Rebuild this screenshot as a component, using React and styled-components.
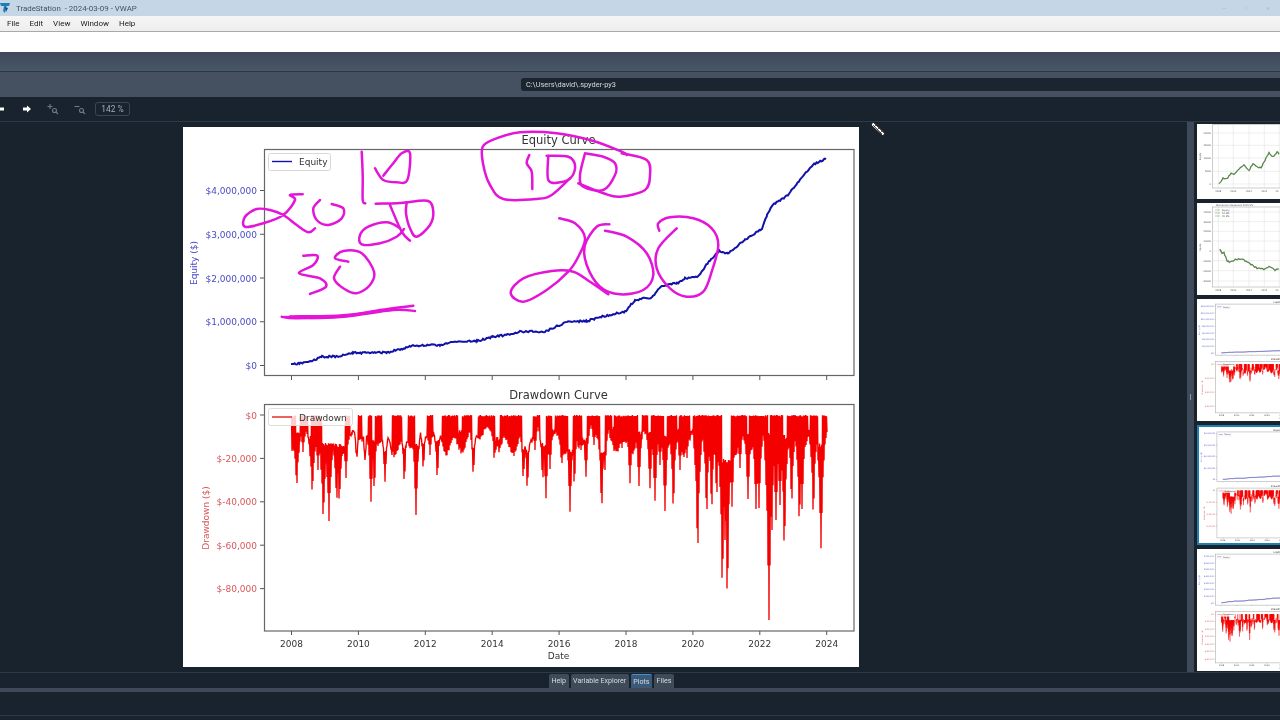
import React from 'react';
import styled, { createGlobalStyle } from 'styled-components';

// chart data is kept in page pixels, the figure viewBox starts at the plot's corner
const random = (seed) => {
    let s = seed;
    return () => {
        s = (s * 1664525 + 1013904223) % 4294967296;
        return s / 4294967296;
    };
};

const equityKeys = [[291, 364.5], [300, 363.5], [313, 360.7], [322, 356.7], [337, 356.5], [353, 353], [387, 352.5], [400, 349.3], [413, 345.7], [440, 345], [455, 341.7], [477, 341], [493, 336.7], [513, 334.3], [520, 331.5], [545, 331.7], [567, 321.7], [587, 321], [600, 317], [625, 311.7], [635, 300], [652, 297.3], [662, 285.7], [677, 283.3], [685, 278.3], [698, 276.7], [710, 260], [719, 251], [728, 253.3], [745, 240], [762, 228.3], [767, 215], [773, 205], [788, 195], [813, 164.3], [827, 158.3]];

const buildEquity = (keys, flatten, seed) => {
    const rnd = random(seed);
    const pts = [];
    for (let i = 0; i < keys.length - 1; i++) {
        const [x0, y0] = keys[i];
        const [x1, y1] = keys[i + 1];
        for (let x = x0; x < x1; x += 1.2) {
            const y = y0 + ((y1 - y0) * (x - x0)) / (x1 - x0) + (rnd() - 0.5) * 1.8;
            pts.push(`${x.toFixed(1)},${(365.5 - (365.5 - y) * flatten).toFixed(1)}`);
        }
    }
    return pts.join(' ');
};

const spikes = [[296.7, 485], [303, 452], [312.3, 491.7], [318, 470], [323.3, 516.7], [329, 521], [336.7, 500], [339.3, 501], [346, 478], [356.7, 458], [365, 460], [371, 501.7], [374.3, 488], [385, 481.7], [392, 455], [404.3, 480.7], [416, 515], [423.3, 468], [430, 455], [437.3, 476.7], [446.7, 438], [457.3, 445], [466, 436], [473.3, 473.3], [482, 430], [494.3, 459], [499.3, 453.3], [514.3, 445], [523.3, 477.7], [527.3, 487.7], [535, 450], [542.7, 479], [546, 498.3], [550, 469], [561.7, 464.3], [570, 511.7], [574.3, 483.3], [586, 476.7], [594, 445], [601.7, 505.7], [605, 470], [616, 438], [622, 448], [630, 483.3], [639, 486], [650, 488.3], [655, 500.7], [660, 465], [665, 511], [673.3, 506], [680, 470], [687, 458], [697.7, 546.7], [706.7, 511.7], [711.7, 506.7], [716.7, 494.3], [722.3, 582.3], [725, 540], [727.3, 593.3], [732, 506.7], [740, 468], [748, 499], [756, 509], [759, 508], [769, 620], [771.7, 533.3], [776, 520], [780, 505], [784.3, 544], [791.7, 501], [799.3, 519], [802, 509], [813.3, 512.3], [821, 548.3], [826, 438]];

const notches = [[296, 300, 16], [308, 311, 20], [322, 345, 28], [350, 358, 34], [361.7, 368, 36], [371.7, 375, 24], [381.7, 391.7, 34], [401.7, 408, 30], [415, 426.7, 28], [433, 441.7, 24], [458, 461.7, 14], [471.7, 478, 30], [495, 500, 22], [521.7, 533, 34], [540, 546, 28], [552, 555, 14], [568, 573, 34], [581.7, 586.7, 22], [600, 605, 36], [612, 614, 10], [638, 641.7, 16], [648, 650.7, 16], [664, 667.3, 20], [677, 679, 12], [690, 693, 14], [721.7, 730.7, 44], [746.7, 749.3, 18], [768, 770, 16], [783, 786.7, 20], [808, 810, 12], [818, 821.7, 28]];

const buildDrawdown = (spikeList, notchList, seed) => {
    const rnd = random(seed);
    const pts = [];
    let up = true;
    for (let x = 291.5; x <= 827; x += 0.5) {
        const phase = Math.sin(x * 0.37) + Math.sin(x * 0.11 + 2);
        let low = 415 + 14 + 8 * (phase + 1) + rnd() * 5;
        // 2008 and 2009 are a heavier block than the later years
        const body = x < 345 ? 0.75 : 0.6;
        spikeList.forEach(([sx, sy]) => {
            const near = (x - sx) / 1.8;
            const wide = (x - sx) / 4;
            low = Math.max(low, 415 + (sy - 415) * Math.exp(-near * near), 415 + (sy - 415) * body * Math.exp(-wide * wide));
        });
        const notch = notchList.find(([a, b]) => x >= a && x <= b);
        const top = notch ? Math.min(low - 2, 415 + notch[2] + rnd() * 4) : 415 + rnd() * 1.5;
        // every other sample goes to the bottom of the band so it reads as a filled mass
        pts.push(`${x.toFixed(1)},${(up ? top : low).toFixed(1)}`);
        up = !up;
    }
    return pts.join(' ');
};

// round a list of traced points into a pen stroke
const smooth = (pts) => {
    let d = `M${pts[0][0]} ${pts[0][1]}`;
    for (let i = 0; i < pts.length - 1; i++) {
        const p0 = pts[i - 1] || pts[i];
        const p1 = pts[i];
        const p2 = pts[i + 1];
        const p3 = pts[i + 2] || p2;
        const c1x = p1[0] + (p2[0] - p0[0]) / 6;
        const c1y = p1[1] + (p2[1] - p0[1]) / 6;
        const c2x = p2[0] - (p3[0] - p1[0]) / 6;
        const c2y = p2[1] - (p3[1] - p1[1]) / 6;
        d += ` C${c1x.toFixed(1)} ${c1y.toFixed(1)} ${c2x.toFixed(1)} ${c2y.toFixed(1)} ${p2[0]} ${p2[1]}`;
    }
    return d;
};

const inkStrokes = [
    [[361.7, 151.7], [362.7, 175], [362.7, 200], [365.3, 203.3]],
    [[375, 168.3], [383.3, 180], [396.7, 182.3], [407.3, 180], [410, 153.3], [401.7, 153.3], [393.3, 163.3], [383.3, 175.7]],
    [[302.7, 194.3], [290, 195], [295, 200], [283.3, 215], [263.3, 223.3], [245, 226.7], [245, 216.7], [256.7, 209], [270, 210], [283.3, 215], [296.7, 225], [308.3, 232.3], [315, 228.3]],
    [[320, 200], [313.3, 208.3], [316.7, 220], [328.3, 225], [341.7, 218.3], [343.3, 208.3], [331.7, 204]],
    [[375.7, 203.7], [396.7, 203.3], [406.7, 202.3]],
    [[390, 205], [401.7, 231.7], [410, 240.7]],
    [[400, 228], [386.7, 222.3], [368.3, 226.7], [360, 235], [361.7, 244.3], [380, 243.3], [396.7, 236.7], [404, 229]],
    [[406.7, 202.3], [428.3, 201], [433.3, 211.7], [430, 225], [416.7, 236.7], [410, 228.3], [406, 213.3], [406.7, 202.3]],
    [[303.3, 255.7], [317.3, 255.7], [313.3, 265], [299, 273.3], [320, 278.3], [326, 286.7], [310, 294]],
    [[348.3, 261.7], [335, 258.3], [343.3, 251], [361.7, 253.3], [374, 271.7], [370, 285], [356.7, 293.3], [343.3, 288.3], [334, 278.3], [340, 266.7]],
    [[281.7, 316.7], [296.7, 318.3], [346.7, 315.7], [380, 310], [413.3, 305.7]],
    [[285, 317], [320, 318], [346.7, 316.5], [393.3, 310], [415, 311]],
    [[290, 316.5], [340, 315.5], [380, 311]],
    [[626.7, 155], [621.7, 151.7], [593.3, 141], [556.7, 133.3], [520, 132.3], [496.7, 138.3], [482.7, 146.7], [483.3, 165], [490, 185], [503.3, 199], [536.7, 199], [551.7, 195], [570, 178.3]],
    [[548.3, 155.7], [548.3, 180], [560, 182.3], [571.7, 176.7], [575, 165], [568.3, 156.7], [546.7, 155.7]],
    [[621.7, 153.3], [646.7, 160], [650, 175], [645, 190], [620, 196.7], [603.3, 193.3], [578.3, 183.3]],
    [[585, 153.3], [580, 175], [583.3, 186.7], [603.3, 190], [615, 175], [615, 163.3], [603.3, 156.7], [585, 153.3]],
    [[529.3, 155], [526.7, 163.3], [531.7, 171.7], [532.3, 189]],
    [[559.3, 218.3], [575, 223.3], [585, 238.3], [578.3, 256.7], [568.3, 271.7], [546.7, 290], [523.3, 301.7], [510.7, 292.7], [523.3, 278.3], [551.7, 271], [573.3, 271.7], [590, 281.7], [608.3, 294.3]],
    [[609.3, 224.3], [596.7, 226.7], [585, 245], [586.7, 265], [600, 286.7], [620, 294.3], [643.3, 290], [653.3, 275], [646.7, 253.3], [626.7, 236.7], [605, 230.7]],
    [[659.3, 230.7], [658.3, 223.3], [670, 217.3], [693.3, 218.3], [711.7, 228.3], [718.3, 245], [711.7, 271.7], [703.3, 291.7], [686.7, 296.7], [670, 288.3], [656.7, 268.3], [658.3, 248.3], [676.7, 228.3]],
];

const mainEquity = buildEquity(equityKeys, 1, 11);
const mainDrawdown = buildDrawdown(spikes, notches, 7);
const bigFundEquity = buildEquity(equityKeys, 0.27, 23);
const midFundEquity = buildEquity(equityKeys, 0.45, 31);
const thirdDrawdown = buildDrawdown(spikes.map(([x, y]) => [x * 0.98 + 10, 415 + (y - 415) * 0.8]), notches, 41);
const lastEquity = buildEquity(equityKeys, 0.62, 57);
const lastDrawdown = buildDrawdown(spikes.map(([x, y]) => [x, 415 + (y - 415) * 1.15]), notches.map(([a, b]) => [a + 2, b + 5, 26]), 63);

const years = [2008, 2010, 2012, 2014, 2016, 2018, 2020, 2022, 2024];
const yearX = (i) => 291.5 + i * 66.9;

const Figure = ({ equity, drawdown, eqTicks, ddTicks, eqStep = 43.75, ddStep = 43.4, thumb, children }) => (
    <svg viewBox={thumb ? '183 127 368 540' : '183 127 676 540'} width="100%" height="100%" preserveAspectRatio="xMinYMin slice">
        <rect x="183" y="127" width="676" height="540" fill="#fff" />
        <FigTitle x="558.5" y="144">Equity Curve</FigTitle>
        <FigTitle x="558.5" y="399">Drawdown Curve</FigTitle>
        <polyline points={equity} fill="none" stroke={thumb ? '#4040b0' : '#1212a8'} strokeWidth={thumb ? 4 : 2} />
        <polyline points={drawdown} fill="none" stroke="#f40000" strokeWidth={thumb ? 1.8 : 1.35} />
        <rect x="264.5" y="149.5" width="589.5" height="226" fill="none" stroke={thumb ? '#aaa' : '#666'} strokeWidth={thumb ? 2.5 : 1.2} />
        <rect x="264.5" y="404.5" width="589.5" height="226.5" fill="none" stroke={thumb ? '#aaa' : '#666'} strokeWidth={thumb ? 2.5 : 1.2} />
        {years.map((year, i) => (
            <g key={year}>
                <line x1={yearX(i)} x2={yearX(i)} y1="376" y2="380" stroke="#555" />
                <line x1={yearX(i)} x2={yearX(i)} y1="631" y2="635" stroke="#555" />
                <TickText x={yearX(i)} y="647" textAnchor="middle">{year}</TickText>
            </g>
        ))}
        {eqTicks.map((label, i) => (
            <g key={label}>
                <line x1="260" x2="264" y1={365.5 - i * eqStep} y2={365.5 - i * eqStep} stroke="#555" />
                <TickText x="257" y={369 - i * eqStep} textAnchor="end" $color="#4b4bc4">{label}</TickText>
            </g>
        ))}
        {ddTicks.map((label, i) => (
            <g key={label}>
                <line x1="260" x2="264" y1={415 + i * ddStep} y2={415 + i * ddStep} stroke="#555" />
                <TickText x="257" y={418.5 + i * ddStep} textAnchor="end" $color="#d9575a">{label}</TickText>
            </g>
        ))}
        <TickText x="197" y="263" textAnchor="middle" $color="#4b4bc4" transform="rotate(-90 197 263)">Equity ($)</TickText>
        <TickText x="209" y="518" textAnchor="middle" $color="#d9575a" transform="rotate(-90 209 518)">Drawdown ($)</TickText>
        <TickText x="558.5" y="659" textAnchor="middle">Date</TickText>
        <rect x="268.5" y="153.5" width="62" height="17" rx="2" fill="#fff" fillOpacity="0.85" stroke="#d8d8d8" />
        <line x1="272" x2="292" y1="161.5" y2="161.5" stroke="#1212a8" strokeWidth="1.4" />
        <TickText x="299" y="165">Equity</TickText>
        <rect x="268.5" y="408.5" width="84" height="17" rx="2" fill="#fff" fillOpacity="0.8" stroke="#ddd" />
        <line x1="272" x2="292" y1="417" y2="417" stroke="#e02020" strokeWidth="1.4" />
        <TickText x="299" y="420.5">Drawdown</TickText>
        {children}
    </svg>
);

const greenOne = [[22, 60], [26, 54], [30, 55], [34, 49], [38, 50], [42, 45], [47, 41], [52, 46], [56, 40], [60, 43], [64, 44], [68, 36], [72, 29], [76, 33], [80, 28], [83, 30]];
const greenTwo = [[23, 46.5], [25, 50], [27, 50], [30, 58], [33, 59], [40, 56], [46, 56], [50, 59], [55, 62], [60, 65], [67, 66], [72, 64], [78, 67], [83, 66]];

const toPoints = (keys, seed) => {
    const rnd = random(seed);
    const pts = [];
    for (let i = 0; i < keys.length - 1; i++) {
        for (let t = 0; t < 1; t += 0.25) {
            const x = keys[i][0] + (keys[i + 1][0] - keys[i][0]) * t;
            const y = keys[i][1] + (keys[i + 1][1] - keys[i][1]) * t + (rnd() - 0.5) * 1.6;
            pts.push(`${x.toFixed(1)},${y.toFixed(1)}`);
        }
    }
    return pts.join(' ');
};

const GreenChart = ({ height, top, bottom, ticks, points, title, legend }) => (
    <svg viewBox={`0 0 83 ${height}`} width="100%" height="100%">
        <rect width="83" height={height} fill="#fff" />
        {[36.3, 52, 67.3, 82.3].concat(21.3).map((x) => (
            <line key={x} x1={x} x2={x} y1={top} y2={bottom} stroke="#dcdcdc" strokeWidth="0.5" />
        ))}
        {ticks.map(([y]) => (
            <line key={y} x1="15.5" x2="83" y1={y} y2={y} stroke="#dcdcdc" strokeWidth="0.5" />
        ))}
        <rect x="15.5" y={top} width="80" height={bottom - top} fill="none" stroke="#aaa" strokeWidth="0.6" />
        <polyline points={points} fill="none" stroke="#6a9c58" strokeWidth="1.3" />
        <polyline points={points} fill="none" stroke="#333" strokeWidth="0.25" />
        {ticks.map(([y, label]) => (
            <TinyText key={y} x="14" y={y + 0.8} textAnchor="end">{label}</TinyText>
        ))}
        {[[21.3, '2008'], [36.3, '2010'], [52, '2012'], [67.3, '2014'], [80, '20']].map(([x, label]) => (
            <TinyText key={x} x={x} y={bottom + 4} textAnchor="middle">{label}</TinyText>
        ))}
        <TinyText x="4" y={(top + bottom) / 2} textAnchor="middle" transform={`rotate(-90 4 ${(top + bottom) / 2})`}>Equity</TinyText>
        {title && <TinyText x="19" y="3">{title}</TinyText>}
        {legend && legend.map((label, i) => (
            <g key={label}>
                <line x1="18" x2="23" y1={7 + i * 3} y2={7 + i * 3} stroke="#6a9c58" strokeWidth="0.5" />
                <TinyText x="25" y={7.8 + i * 3}>{label}</TinyText>
            </g>
        ))}
    </svg>
);

const App = () => (
    <Page>
        <GlobalStyle />
        <TitleBar>
            <svg width="11" height="12" viewBox="0 0 11 12">
                <path d="M0 1h10l-1 3H6.5L5 11 3 9l1-5H1z" fill="#1d7fb4" />
                <path d="M5 5l3 1-2 4z" fill="#0f4f86" />
            </svg>
            <WindowTitle>TradeStation  - 2024-03-09 - VWAP</WindowTitle>
            <WindowButtons>
                <span>–</span>
                <span>▫</span>
                <span>×</span>
            </WindowButtons>
        </TitleBar>
        <MenuBar>
            {['File', 'Edit', 'View', 'Window', 'Help'].map((item) => (
                <MenuItem key={item}>{item}</MenuItem>
            ))}
        </MenuBar>
        <BlankStrip />
        <SlateBand />
        <AddressRow>
            <PathField>C:\Users\david\.spyder-py3</PathField>
        </AddressRow>
        <Toolbar>
            <ToolIcon $clipped>
                <svg width="10" height="10" viewBox="0 0 10 10"><path d="M1 5l4-3.5V3.5h4v3H5v2z" fill="#fff" /></svg>
            </ToolIcon>
            <ToolIcon>
                <svg width="10" height="10" viewBox="0 0 10 10"><path d="M9 5L5 1.5V3.5H1v3h4v2z" fill="#fff" /></svg>
            </ToolIcon>
            <ToolIcon>
                <svg width="12" height="12" viewBox="0 0 12 12" fill="none" stroke="#6f7a86" strokeWidth="1.1">
                    <path d="M0.5 3.5h5M3 1v5" />
                    <circle cx="7.5" cy="7.5" r="2" />
                    <path d="M9 9l2 2" />
                </svg>
            </ToolIcon>
            <ToolIcon>
                <svg width="12" height="12" viewBox="0 0 12 12" fill="none" stroke="#6f7a86" strokeWidth="1.1">
                    <path d="M0.5 3.5h5" />
                    <circle cx="7.5" cy="7.5" r="2" />
                    <path d="M9 9l2 2" />
                </svg>
            </ToolIcon>
            <ZoomBox>142 %</ZoomBox>
        </Toolbar>
        <Main>
            <PlotArea>
                <PlotFrame>
                    <Figure
                        equity={mainEquity}
                        drawdown={mainDrawdown}
                        eqTicks={['$0', '$1,000,000', '$2,000,000', '$3,000,000', '$4,000,000']}
                        ddTicks={['$0', '$-20,000', '$-40,000', '$-60,000', '$-80,000']}
                    >
                        {inkStrokes.map((stroke, i) => (
                            <path key={i} d={smooth(stroke)} fill="none" stroke="#e315d8" strokeWidth="2.5" strokeLinecap="round" strokeLinejoin="round" />
                        ))}
                    </Figure>
                </PlotFrame>
                <PenCursor>
                    <svg width="16" height="16" viewBox="0 0 16 16">
                        <path d="M3 1l12 11-2 3L1 4z" fill="#fff" stroke="#222" strokeWidth="1" />
                        <path d="M5 3l9 9M3 4l9 9M7 3l-3 3M10 6l-3 3M13 9l-3 3" stroke="#333" strokeWidth="0.8" />
                    </svg>
                </PenCursor>
            </PlotArea>
            <Splitter><SplitterMark /></Splitter>
            <Thumbs>
                <Thumb $height={75}>
                    <GreenChart
                        height={75}
                        top={0.7}
                        bottom={64}
                        points={toPoints(greenOne, 3)}
                        ticks={[[9, '20000'], [21.3, '15000'], [34, '10000'], [47.3, '5000'], [60, '0']]}
                    />
                </Thumb>
                <Thumb $height={92}>
                    <GreenChart
                        height={92}
                        top={4}
                        bottom={84}
                        points={toPoints(greenTwo, 5)}
                        title="Momentum Reversals 2015 5%"
                        legend={['Equity', '10 MA', '20 MA']}
                        ticks={[[9, '40000'], [18.7, '30000'], [28.3, '20000'], [38, '10000'], [48, '0'], [57.7, '-10000'], [67.7, '-20000'], [78, '-30000']]}
                    />
                </Thumb>
                <Thumb $height={122}>
                    <Figure
                        thumb
                        equity={bigFundEquity}
                        drawdown={thirdDrawdown}
                        eqStep={29.5}
                        ddStep={62}
                        eqTicks={['$0', '$2,000,000', '$4,000,000', '$6,000,000', '$8,000,000', '$10,000,000', '$12,000,000', '$14,000,000']}
                        ddTicks={['$0', '$-10,000', '$-20,000', '$-30,000']}
                    />
                </Thumb>
                <Thumb $height={120} $selected>
                    <Figure
                        thumb
                        equity={midFundEquity}
                        drawdown={mainDrawdown}
                        eqStep={52}
                        ddStep={54}
                        eqTicks={['$0', '$1,000,000', '$2,000,000', '$3,000,000', '$4,000,000']}
                        ddTicks={['$0', '$-20,000', '$-40,000', '$-60,000']}
                    />
                </Thumb>
                <Thumb $height={122}>
                    <Figure
                        thumb
                        equity={lastEquity}
                        drawdown={lastDrawdown}
                        eqStep={29.5}
                        ddStep={33}
                        eqTicks={['$0', '$100,000', '$200,000', '$300,000', '$400,000', '$500,000', '$600,000', '$700,000']}
                        ddTicks={['$0', '$-10,000', '$-20,000', '$-30,000', '$-40,000', '$-50,000', '$-60,000']}
                    />
                </Thumb>
            </Thumbs>
        </Main>
        <TabBar>
            <Tab>Help</Tab>
            <Tab>Variable Explorer</Tab>
            <Tab $active>Plots</Tab>
            <Tab>Files</Tab>
        </TabBar>
        <SlimBand />
        <StatusArea />
    </Page>
);

export default App;

const GlobalStyle = createGlobalStyle`
    html, body {
        margin: 0;
        width: 1280px;
        height: 720px;
        overflow: hidden;
        background: #19232d;
    }
`;

const Page = styled.div`
    width: 1280px;
    height: 720px;
    display: flex;
    flex-direction: column;
    overflow: hidden;
    background: #19232d;
    font-family: Roboto, "Liberation Sans", sans-serif;
    filter: blur(0.45px);
`;

const TitleBar = styled.div`
    height: 16px;
    display: flex;
    align-items: center;
    background: #c5d6e6;
`;

const WindowTitle = styled.span`
    margin-left: 5px;
    font-size: 7.9px;
    color: #46535f;
    white-space: pre;
`;

const WindowButtons = styled.div`
    margin-left: auto;
    margin-right: 10px;
    display: flex;
    gap: 18px;
    font-size: 8px;
    color: #b3c2d0;
`;

const MenuBar = styled.div`
    height: 15px;
    display: flex;
    align-items: center;
    padding-left: 7px;
    gap: 10px;
    background: linear-gradient(#f5f5f5, #eeeeee);
    border-bottom: 1px solid #a9a9a9;
`;

const MenuItem = styled.span`
    font-size: 8px;
    color: #222;
`;

const BlankStrip = styled.div`
    height: 20px;
    background: #fff;
`;

const SlateBand = styled.div`
    height: 19px;
    background: linear-gradient(#3e4a59, #495666);
    border-bottom: 1px solid #2b3745;
`;

const AddressRow = styled.div`
    height: 25px;
    display: flex;
    justify-content: flex-end;
    align-items: flex-start;
    padding-top: 6px;
    box-sizing: border-box;
    background: #455160;
`;

const PathField = styled.div`
    width: 759px;
    height: 13px;
    box-sizing: border-box;
    padding-left: 5px;
    border-radius: 3px 0 0 3px;
    background: #1a252f;
    color: #d5dadf;
    font-size: 7.4px;
    line-height: 13px;
`;

const Toolbar = styled.div`
    height: 25px;
    box-sizing: border-box;
    display: flex;
    align-items: center;
    padding-bottom: 1px;
    background: #19232d;
    border-bottom: 1px solid #2d3946;
`;

const ToolIcon = styled.span`
    width: 26.5px;
    display: flex;
    justify-content: center;
    margin-left: ${(props) => (props.$clipped ? '-13px' : '0')};
`;

const ZoomBox = styled.div`
    width: 35px;
    height: 14px;
    margin-left: 2px;
    box-sizing: border-box;
    border: 1px solid #3a4654;
    border-radius: 3px;
    color: #a4adb6;
    font-size: 8.4px;
    line-height: 12px;
    text-align: center;
`;

const Main = styled.div`
    height: 550px;
    display: grid;
    grid-template-columns: 1187px 8px 83px;
    column-gap: 0;
`;

const PlotArea = styled.div`
    position: relative;
    padding: 5px 0 0 183px;
`;

const PlotFrame = styled.div`
    width: 676px;
    height: 540px;
    line-height: 0;
`;

const PenCursor = styled.div`
    position: absolute;
    left: 870px;
    top: -1px;
    line-height: 0;
`;

const Splitter = styled.div`
    background: #3e4a5a;
    display: flex;
    align-items: center;
    justify-content: center;
    margin-right: 1px;
`;

const SplitterMark = styled.div`
    width: 1px;
    height: 6px;
    background: #8b96a3;
`;

const Thumbs = styled.div`
    display: flex;
    flex-direction: column;
    gap: 4px;
    padding-top: 2px;
    margin-left: 2px;
    width: 83px;
`;

const Thumb = styled.div`
    height: ${(props) => props.$height}px;
    flex: none;
    box-sizing: border-box;
    overflow: hidden;
    line-height: 0;
    background: #fff;
    border: ${(props) => (props.$selected ? '2px solid #1f7fb3' : '0')};
    border-right: 0;
`;

const TabBar = styled.div`
    height: 16px;
    box-sizing: border-box;
    display: flex;
    gap: 2px;
    padding: 1px 0 0 549px;
    border-top: 1px solid #2d3946;
`;

const Tab = styled.div`
    padding: 0 2.5px;
    height: 14px;
    box-sizing: border-box;
    border-radius: 2px 2px 0 0;
    border-top: ${(props) => (props.$active ? '1px solid #3a94d8' : '0')};
    background: ${(props) => (props.$active ? '#3c5a78' : '#3f4b59')};
    color: #d6dbe0;
    font-size: 7.1px;
    line-height: 14px;
`;

const SlimBand = styled.div`
    height: 4px;
    background: #3e4a5a;
`;

const StatusArea = styled.div`
    height: 24px;
    box-sizing: border-box;
    background: #19232d;
    border-bottom: 1px solid #2d3946;
`;

const FigTitle = styled.text`
    font-family: "DejaVu Sans", sans-serif;
    font-size: 11.5px;
    fill: #333;
    text-anchor: middle;
`;

const TickText = styled.text`
    font-family: "DejaVu Sans", sans-serif;
    font-size: 9px;
    fill: ${(props) => props.$color || '#333'};
`;

const TinyText = styled.text`
    font-family: "DejaVu Sans", sans-serif;
    font-size: 2.4px;
    fill: #555;
`;
